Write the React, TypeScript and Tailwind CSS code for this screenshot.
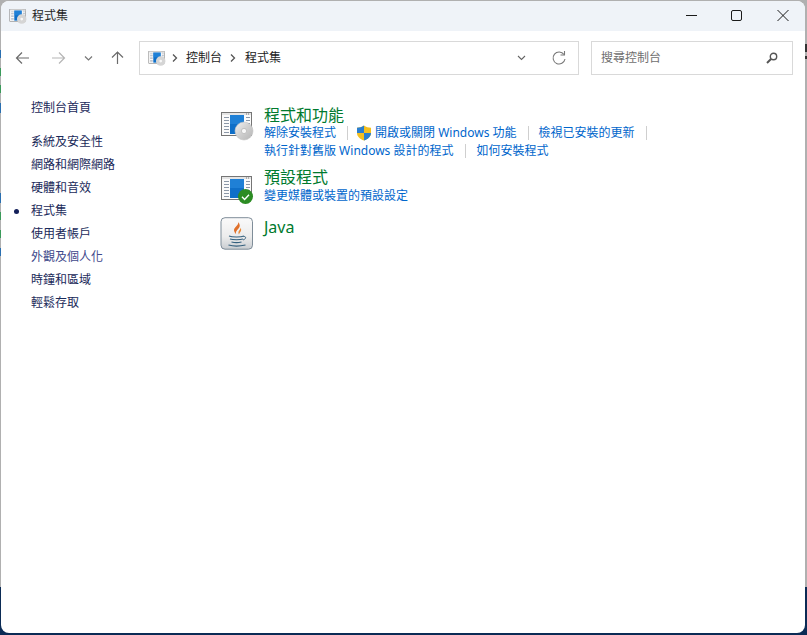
import React from "react";

const fontStyle = "font-['Noto_Sans','Noto_Sans_CJK_TC',sans-serif]";

function WinBase() {
  const rows = [5, 8, 11, 14, 17, 20];
  return (
    <>
      <rect x="1.5" y="0.5" width="30" height="23" fill="#fbfbfb" stroke="#757575" />
      <rect x="2" y="1" width="29" height="2" fill="#e4e4e4" />
      <rect x="26" y="1.5" width="1" height="1" fill="#777" />
      <rect x="28" y="1.5" width="1" height="1" fill="#777" />
      <rect x="10" y="3" width="14" height="19" fill="#0f6fc8" />
      <rect x="10" y="3" width="14" height="9" fill="#2a8ce0" opacity="0.6" />
      {rows.map((y) => (
        <g key={y}>
          <rect x="4" y={y} width="5" height="1" fill="#8c98a8" />
          <rect x="26" y={y} width="4" height="1" fill="#8c98a8" />
        </g>
      ))}
    </>
  );
}

function DiscIcon() {
  return (
    <svg width="34" height="34" viewBox="0 0 34 34" className="block">
      <defs>
        <linearGradient id="disc" x1="0" y1="0" x2="1" y2="1">
          <stop offset="0" stopColor="#f2f2f2" />
          <stop offset="0.5" stopColor="#cfcfcf" />
          <stop offset="1" stopColor="#b5b5b5" />
        </linearGradient>
      </defs>
      <WinBase />
      <circle cx="24" cy="19" r="9" fill="url(#disc)" stroke="#c2c2c2" strokeWidth="0.6" />
      <circle cx="24" cy="19" r="2.6" fill="#f8f8f8" stroke="#a9a9a9" strokeWidth="0.6" />
    </svg>
  );
}

function SmallWin() {
  return (
    <svg width="18" height="18" viewBox="0 0 34 34" className="shrink-0 mt-[4px]">
      <WinBase />
      <circle cx="24" cy="19" r="9" fill="#d5d5d5" />
      <circle cx="24" cy="19" r="2.6" fill="#f8f8f8" />
    </svg>
  );
}

function CheckIcon() {
  return (
    <svg width="34" height="34" viewBox="0 0 34 34" className="block">
      <WinBase />
      <circle cx="25.5" cy="20.5" r="7.5" fill="#2c8c23" />
      <path d="M22 20.8l2.6 2.6 4.4-4.6" fill="none" stroke="#fff" strokeWidth="1.4" />
    </svg>
  );
}

function JavaIcon() {
  return (
    <svg width="34" height="34" viewBox="0 0 34 34" className="block">
      <defs>
        <linearGradient id="jbg" x1="0" y1="0" x2="0" y2="1">
          <stop offset="0" stopColor="#fafafa" />
          <stop offset="0.6" stopColor="#ececec" />
          <stop offset="1" stopColor="#c9cdd1" />
        </linearGradient>
      </defs>
      <rect x="1" y="0.7" width="31.5" height="31.5" rx="4" fill="url(#jbg)" stroke="#7f8d99" />
      <path d="M18 5c1.5 3-4 5-4 8 0 1.5 1 3 2 4-.5-2 .5-3.500 2.500-5.500C20.500 9.500 20 7 18 5z" fill="#e0702a" />
      <path d="M20.500 10.500c.5 2-2.500 3-2 6l.5 1c.5-2 3.500-3.500 1.500-7z" fill="#e88a3a" />
      <path d="M9 19c3 1.300 12 1.300 15 0M10 22c3 1 10 1 13 0M11.500 25c3 .8 7 .8 10 0M8.500 28c4 1.200 12 1.200 17 0" fill="none" stroke="#34607e" strokeWidth="1.100" />
      <path d="M23.500 19.500c3-.5 3 2.500-.5 3.500" fill="none" stroke="#34607e" strokeWidth="0.9" />
    </svg>
  );
}

function Shield() {
  return (
    <svg width="16" height="16" viewBox="0 0 16 16" className="block shrink-0">
      <path d="M8 0.500C6 2 3.500 2.700 1 2.800V8c0 3.500 3 6 7 7.500 4-1.500 7-4 7-7.500V2.800C12.500 2.700 10 2 8 0.500z" fill="#f4c020" />
      <path d="M8 0.500C6 2 3.500 2.700 1 2.800V8h7z" fill="#2a7fd0" />
      <path d="M8 8h7c0 3.500-3 6-7 7.500z" fill="#2a7fd0" />
    </svg>
  );
}

function Sep() {
  return <span className="w-px h-[14px] bg-[#cfcfcf] shrink-0" />;
}

function A({ children }: { children: React.ReactNode }) {
  return <span className="block text-[12px] leading-[18px] text-[#0066cc] whitespace-nowrap">{children}</span>;
}

function H({ children }: { children: React.ReactNode }) {
  return <div className="text-[16px] leading-[18px] text-[#007a2e] whitespace-nowrap">{children}</div>;
}

const side = ["系統及安全性", "網路和網際網路", "硬體和音效", "程式集", "使用者帳戶", "外觀及個人化", "時鐘和區域", "輕鬆存取"];

export default function App() {
  return (
    <div className={`relative w-[807px] h-[635px] overflow-hidden bg-[#0b2b55] ${fontStyle}`}>
      <div className="absolute left-0 top-0 w-full h-[587px] bg-[#b0b0b0]" />
      <div className="absolute left-0 top-[50px] w-[1px] h-[8px] bg-[#2a6fb0]" />
      <div className="absolute left-0 top-[68px] w-[1px] h-[8px] bg-[#3a9a5a]" />
      <div className="absolute left-0 top-[85px] w-[1px] h-[8px] bg-[#3a9a5a]" />
      <div className="absolute left-0 top-[103px] w-[1px] h-[10px] bg-[#2a6fb0]" />
      <div className="absolute left-0 top-[193px] w-[1px] h-[10px] bg-[#2a6fb0]" />
      <div className="absolute left-0 top-[212px] w-[1px] h-[8px] bg-[#3a9a5a]" />
      <div className="absolute left-0 top-[230px] w-[1px] h-[8px] bg-[#3a9a5a]" />
      <div className="absolute left-0 top-[248px] w-[1px] h-[8px] bg-[#2a6fb0]" />
      <div className="absolute right-0 top-[44px] w-[2px] h-[8px] bg-[#333]" />
      <div className="absolute right-0 top-[56px] w-[2px] h-[3px] bg-[#333]" />
      <div className="absolute left-[1px] top-[1px] w-[804px] h-[632px] rounded-lg overflow-hidden bg-white flex flex-col">
        <div className="h-[30px] shrink-0 bg-[#eff3f8] flex items-center pl-[8px] relative">
          <SmallWin />
          <span className="ml-[5px] text-[12px] text-[#1f1f1f]">程式集</span>
          <svg width="120" height="30" viewBox="0 0 120 30" className="ml-auto mr-[3px] shrink-0" fill="none" stroke="#1a1a1a" strokeWidth="1">
            <path d="M4 14.500h11" />
            <rect x="49.500" y="9.500" width="10" height="10" rx="1.500" />
            <path d="M95.500 9l11 11M106.500 9l-11 11" />
          </svg>
        </div>
        <div className="h-[54px] shrink-0 flex items-center">
          <svg width="138" height="54" viewBox="0 0 138 54" className="shrink-0" fill="none" strokeWidth="1.200">
            <path d="M16 27h12M21 21.500L15.500 27l5.500 5.500" stroke="#6b6b6b" />
            <path d="M51 27h12M58 21.500l5.500 5.500-5.500 5.500" stroke="#b5b5b5" />
            <path d="M84 25.500l3.500 3.500 3.500-3.500" stroke="#777" />
            <path d="M116.500 33V21M111 26.500l5.500-5.500 5.500 5.500" stroke="#6b6b6b" />
          </svg>
          <div className="w-[440px] h-[34px] shrink-0 border border-[#d9d9d9] flex items-center pl-[8px] pr-[12px]">
            <SmallWin />
            <svg width="8" height="10" viewBox="0 0 8 10" className="ml-[5px] shrink-0" fill="none" stroke="#555" strokeWidth="1.300">
              <path d="M2 1.500L5.500 5 2 8.500" />
            </svg>
            <span className="ml-[7px] text-[12px] text-[#222]">控制台</span>
            <svg width="8" height="10" viewBox="0 0 8 10" className="ml-[7px] shrink-0" fill="none" stroke="#555" strokeWidth="1.300">
              <path d="M2 1.500L5.500 5 2 8.500" />
            </svg>
            <span className="ml-[8px] text-[12px] text-[#222]">程式集</span>
            <svg width="52" height="16" viewBox="0 0 52 16" className="ml-auto shrink-0" fill="none" stroke="#777" strokeWidth="1.100">
              <path d="M4 6l3.500 3.500L11 6" stroke="#666" />
              <path d="M50 4.500A6 6 0 1 0 51 9" />
              <path d="M50.500 1v4h-4" />
            </svg>
          </div>
          <div className="ml-[12px] w-[202px] h-[34px] shrink-0 border border-[#d9d9d9] flex items-center justify-between pl-[9px] pr-[14px]">
            <span className="text-[12px] text-[#6f6f6f]">搜尋控制台</span>
            <svg width="12" height="12" viewBox="0 0 12 12" fill="none" stroke="#555">
              <circle cx="7.500" cy="4.500" r="3.200" strokeWidth="1.400" />
              <path d="M5 7L1 11" strokeWidth="2" />
            </svg>
          </div>
        </div>
        <div className="flex flex-1 min-h-0">
          <div className="w-[219px] shrink-0 pl-[30px] pt-[14px] relative">
            <div className="text-[12px] leading-[18px] text-[#1a2a5a]">控制台首頁</div>
            <div className="mt-[16px] flex flex-col gap-[5px]">
              {side.map((s) => (
                <div key={s} className={`text-[12px] leading-[18px] relative ${s === "外觀及個人化" ? "text-[#3f4a8c]" : "text-[#1a2a5a]"}`}>
                  {s === "程式集" && <span className="absolute left-[-17px] top-[7px] w-[5px] h-[5px] rounded-full bg-[#14205a]" />}
                  {s}
                </div>
              ))}
            </div>
          </div>
          <div className="flex-1 pt-[21px] flex flex-col">
            <div className="flex">
              <div className="w-[44px] shrink-0 pt-[6px]"><DiscIcon /></div>
              <div>
                <H>程式和功能</H>
                <div className="flex items-center gap-[11px]">
                  <A>解除安裝程式</A>
                  <Sep />
                  <span className="flex items-center gap-[3px] -ml-[3px]"><Shield /><A>開啟或關閉 Windows 功能</A></span>
                  <Sep />
                  <span className="-ml-[1px]"><A>檢視已安裝的更新</A></span>
                  <Sep />
                </div>
                <div className="flex items-center gap-[11px]">
                  <A>執行針對舊版 Windows 設計的程式</A>
                  <Sep />
                  <A>如何安裝程式</A>
                </div>
              </div>
            </div>
            <div className="flex mt-[8px]">
              <div className="w-[44px] shrink-0 pt-[8px]"><CheckIcon /></div>
              <div>
                <H>預設程式</H>
                <div className="mt-[1px]"><A>變更媒體或裝置的預設設定</A></div>
              </div>
            </div>
            <div className="flex mt-[7px]">
              <div className="w-[44px] shrink-0"><JavaIcon /></div>
              <div className="mt-[1px]"><H>Java</H></div>
            </div>
          </div>
        </div>
      </div>
    </div>
  );
}
